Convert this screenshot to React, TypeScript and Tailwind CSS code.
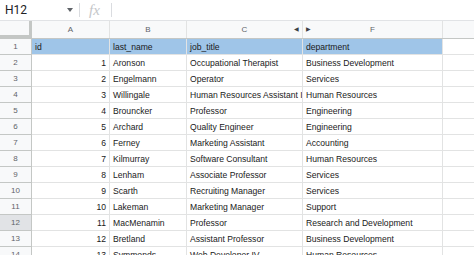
const rows: [string, string, string, string][] = [
  ["1", "Aronson", "Occupational Therapist", "Business Development"],
  ["2", "Engelmann", "Operator", "Services"],
  ["3", "Willingale", "Human Resources Assistant I", "Human Resources"],
  ["4", "Brouncker", "Professor", "Engineering"],
  ["5", "Archard", "Quality Engineer", "Engineering"],
  ["6", "Ferney", "Marketing Assistant", "Accounting"],
  ["7", "Kilmurray", "Software Consultant", "Human Resources"],
  ["8", "Lenham", "Associate Professor", "Services"],
  ["9", "Scarth", "Recruiting Manager", "Services"],
  ["10", "Lakeman", "Marketing Manager", "Support"],
  ["11", "MacMenamin", "Professor", "Research and Development"],
  ["12", "Bretland", "Assistant Professor", "Business Development"],
  ["13", "Symmonds", "Web Developer IV", "Human Resources"],
];

const grid = "grid grid-cols-[32px_78px_77px_116px_140px_1fr]";
const cell = "h-4 overflow-hidden whitespace-nowrap border-b border-r border-[#e2e3e3] px-[3px] leading-[16px]";

export default function App() {
  return (
    <div className="h-[255px] w-[474px] overflow-hidden bg-white font-['Liberation_Sans',Arial,sans-serif] text-[8.6px] text-[#1a1a1a]">
      {/* formula bar */}
      <div className="flex h-[21px] items-center border-b border-[#e1e3e6]">
        <div className="w-[67px] pl-[5px] font-['Roboto',sans-serif] text-[12px] text-[#202124]">H12</div>
        <div className="h-0 w-0 border-x-[3.5px] border-t-[4px] border-x-transparent border-t-[#5f6368]" />
        <div className="ml-[6px] h-[14px] w-px bg-[#dadce0]" />
        <span className="ml-[9px] font-['Liberation_Serif',serif] text-[15px] italic text-[#c4c6c9]">fx</span>
        <div className="ml-[11px] h-[14px] w-px bg-[#dadce0]" />
      </div>

      {/* column headers */}
      <div className={`${grid} h-[18px] border-b border-[#c4c7c5] bg-[#f8f9fa] text-[8px] text-[#5f6368]`}>
        <div className="border-b-[3px] border-r-[3px] border-[#c4c7c5] bg-[#f8f9fa]" />
        <div className="flex items-center justify-center border-r border-[#e2e3e3]">A</div>
        <div className="flex items-center justify-center border-r border-[#e2e3e3]">B</div>
        <div className="relative flex items-center justify-center border-r border-[#e2e3e3]">
          C
          <span className="absolute right-[3px] text-[6px] text-[#3c4043]">◀</span>
        </div>
        <div className="relative flex items-center justify-center border-r border-[#e2e3e3]">
          F
          <span className="absolute left-[3px] text-[6px] text-[#3c4043]">▶</span>
        </div>
        <div />
      </div>

      {/* rows */}
      <div className={grid}>
        <div className="h-4 border-b border-r border-[#c4c7c5] bg-[#f8f9fa] text-center text-[8px] leading-[15px] text-[#5f6368]">1</div>
        <div className={`${cell} bg-[#9fc5e8]`}>id</div>
        <div className={`${cell} bg-[#9fc5e8]`}>last_name</div>
        <div className={`${cell} bg-[#9fc5e8]`}>job_title</div>
        <div className={`${cell} bg-[#9fc5e8]`}>department</div>
        <div className={`${cell} border-r-0`} />
        {rows.map((r, i) => {
          const n = i + 2;
          const selected = n === 12;
          return (
            <div key={n} className="contents">
              <div
                className={`h-4 border-b border-r border-[#c4c7c5] text-center text-[8px] leading-[15px] text-[#5f6368] ${
                  selected ? "bg-[#e1e3e6]" : "bg-[#f8f9fa]"
                }`}
              >
                {n}
              </div>
              <div className={`${cell} text-right`}>{r[0]}</div>
              <div className={cell}>{r[1]}</div>
              <div className={cell}>{r[2]}</div>
              <div className={cell}>{r[3]}</div>
              <div className={`${cell} border-r-0`} />
            </div>
          );
        })}
      </div>
    </div>
  );
}
